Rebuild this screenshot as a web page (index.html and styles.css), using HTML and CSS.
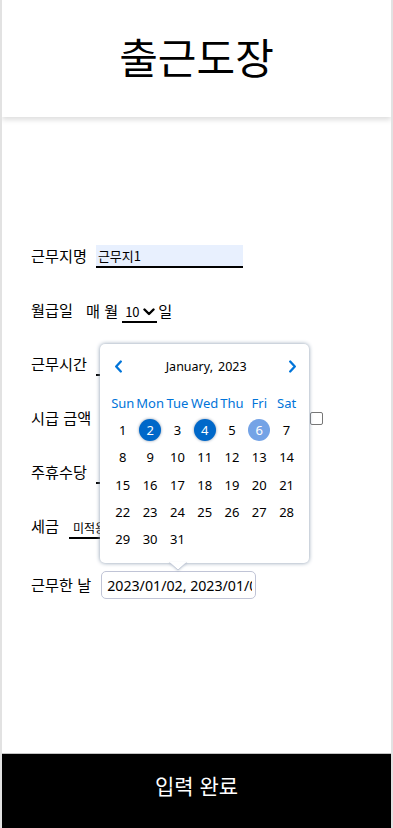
FILE: index.html
```html
<!DOCTYPE html>
<html lang="ko">
<head>
<meta charset="utf-8">
<title>출근도장</title>
<link rel="stylesheet" href="styles.css">
</head>
<body>
<div class="frame">
  <header class="top"><h1>출근도장</h1></header>
  <main class="form">
    <div class="row">
      <span class="label">근무지명</span>
      <div class="text-input filled">근무지1</div>
    </div>
    <div class="row">
      <span class="label">월급일</span>
      <span class="unit">매 월</span>
      <div class="select day-select"><span>10</span><svg class="chev" width="12" height="8" viewBox="0 0 12 8"><path d="M1.5 1.5 L6 6 L10.5 1.5" fill="none" stroke="#000" stroke-width="2.4" stroke-linecap="round" stroke-linejoin="round"/></svg></div>
      <span class="suffix">일</span>
    </div>
    <div class="row">
      <span class="label">근무시간</span>
      <div class="text-input plain"></div>
    </div>
    <div class="row">
      <span class="label">시급 금액</span>
      <div class="text-input wage"></div>
      <span class="checkbox"></span>
    </div>
    <div class="row">
      <span class="label">주휴수당</span>
      <div class="text-input plain"></div>
    </div>
    <div class="row">
      <span class="label">세금</span>
      <div class="select tax-select"><span>미적용</span></div>
    </div>
    <div class="row date-row">
      <span class="label">근무한 날</span>
      <div class="date-wrap">
        <input class="date-input" type="text" value="2023/01/02, 2023/01/04, 2023/01/06" readonly>
        <div class="calendar">
          <div class="cal-head">
            <span class="nav"><svg width="9" height="13" viewBox="0 0 9 13"><path d="M6.8 1.5 L2.2 6.5 L6.8 11.5" fill="none" stroke="#0074d9" stroke-width="2.3" stroke-linecap="round" stroke-linejoin="round"/></svg></span>
            <span class="cal-title"><span>January,</span><span>2023</span></span>
            <span class="nav"><svg width="9" height="13" viewBox="0 0 9 13"><path d="M2.2 1.5 L6.8 6.5 L2.2 11.5" fill="none" stroke="#0074d9" stroke-width="2.3" stroke-linecap="round" stroke-linejoin="round"/></svg></span>
          </div>
          <div class="cal-grid">
            <span class="wd">Sun</span><span class="wd">Mon</span><span class="wd">Tue</span><span class="wd">Wed</span><span class="wd">Thu</span><span class="wd">Fri</span><span class="wd">Sat</span>
            <span class="d"><span>1</span></span><span class="d sel"><span>2</span></span><span class="d"><span>3</span></span><span class="d sel"><span>4</span></span><span class="d"><span>5</span></span><span class="d hov"><span>6</span></span><span class="d"><span>7</span></span>
            <span class="d"><span>8</span></span><span class="d"><span>9</span></span><span class="d"><span>10</span></span><span class="d"><span>11</span></span><span class="d"><span>12</span></span><span class="d"><span>13</span></span><span class="d"><span>14</span></span>
            <span class="d"><span>15</span></span><span class="d"><span>16</span></span><span class="d"><span>17</span></span><span class="d"><span>18</span></span><span class="d"><span>19</span></span><span class="d"><span>20</span></span><span class="d"><span>21</span></span>
            <span class="d"><span>22</span></span><span class="d"><span>23</span></span><span class="d"><span>24</span></span><span class="d"><span>25</span></span><span class="d"><span>26</span></span><span class="d"><span>27</span></span><span class="d"><span>28</span></span>
            <span class="d"><span>29</span></span><span class="d"><span>30</span></span><span class="d"><span>31</span></span>
          </div>
          <svg class="tail" width="18" height="9" viewBox="0 0 18 9"><path d="M0 0 L9 8 L18 0" fill="#fff" stroke="#c3cad8" stroke-width="1"/><rect x="0" y="-1" width="18" height="1.5" fill="#fff"/></svg>
        </div>
      </div>
    </div>
  </main>
  <button class="submit" type="button">입력 완료</button>
</div>
</body>
</html>
```

FILE: styles.css
```css
html, body {
  margin: 0;
  padding: 0;
  background: #fff;
}

body {
  font-family: "Noto Sans CJK KR", "Noto Sans", sans-serif;
  color: #000;
}

.frame {
  width: 393px;
  height: 828px;
  box-sizing: border-box;
  border-left: 2px solid #e2e2e2;
  border-right: 2px solid #e2e2e2;
  display: flex;
  flex-direction: column;
  background: #fff;
  overflow: hidden;
}

.top {
  height: 117px;
  flex: none;
  box-sizing: border-box;
  padding-bottom: 4px;
  display: flex;
  align-items: center;
  justify-content: center;
  box-shadow: 0 3px 5px rgba(0, 0, 0, 0.13);
}

.top h1 {
  margin: 0;
  font-size: 42px;
  font-weight: 400;
  line-height: 1.2;
}

.form {
  flex: 1;
  padding-top: 112px;
  padding-left: 29px;
  display: flex;
  flex-direction: column;
}

.row {
  height: 54px;
  display: flex;
  align-items: center;
  font-size: 15.2px;
  white-space: nowrap;
}

.label {
  line-height: 1;
}

.text-input {
  box-sizing: border-box;
  height: 23px;
  margin-left: 9px;
  padding-left: 2px;
  font-size: 13px;
  display: flex;
  align-items: center;
  border-bottom: 2px solid #000;
}

.text-input.filled {
  width: 147px;
  background: #e8f0fe;
}

.text-input.plain {
  width: 160px;
  margin-top: 1px;
}

.text-input.wage {
  width: 206px;
  margin-left: 4px;
  border-bottom-color: transparent;
}

.unit {
  margin-left: 13px;
}

.select {
  box-sizing: border-box;
  height: 22px;
  display: flex;
  align-items: center;
  border-bottom: 2px solid #000;
  margin-top: 4px;
}

.day-select {
  width: 35px;
  margin-left: 4px;
  padding-left: 3px;
  font-size: 13px;
}

.day-select .chev {
  margin-left: 3px;
  margin-top: 1px;
}

.suffix {
  margin-left: 1px;
}

.tax-select {
  width: 120px;
  margin-left: 10px;
  padding-left: 4px;
  font-size: 12px;
}

.checkbox {
  width: 13px;
  height: 13px;
  box-sizing: border-box;
  border: 1px solid #767676;
  border-radius: 2px;
  margin-left: 9px;
  background: #fff;
}

.date-row {
  margin-top: 5px;
}

.date-wrap {
  position: relative;
  margin-left: 10px;
}

.date-input {
  display: block;
  box-sizing: border-box;
  width: 155px;
  height: 28px;
  margin: 0;
  padding: 0 3px 0 5px;
  border: 1px solid #c0c4d6;
  border-radius: 5px;
  font-family: "Noto Sans", sans-serif;
  font-size: 14.2px;
  color: #000;
  background: #fff;
  outline: none;
}

.calendar {
  position: absolute;
  left: -1px;
  bottom: calc(100% + 8px);
  width: 209px;
  box-sizing: border-box;
  padding: 0 8px 10px 9px;
  background: #fff;
  border-radius: 5px;
  box-shadow: 0 0 4px #8798ad;
  font-family: "Noto Sans", sans-serif;
  z-index: 5;
}

.cal-head {
  height: 45px;
  display: flex;
  align-items: center;
  justify-content: space-between;
}

.nav {
  width: 18px;
  height: 18px;
  display: flex;
  align-items: center;
  justify-content: center;
}

.cal-title {
  font-size: 12.5px;
  display: flex;
  gap: 5px;
  margin-left: 2px;
}

.cal-grid {
  display: grid;
  grid-template-columns: repeat(7, 27.3px);
  grid-auto-rows: 27.3px;
  font-size: 13px;
}

.wd {
  display: flex;
  align-items: center;
  justify-content: center;
  color: #0074d9;
  font-size: 13px;
}

.d {
  display: flex;
  align-items: center;
  justify-content: center;
}

.d span {
  width: 22px;
  height: 22px;
  border-radius: 50%;
  display: flex;
  align-items: center;
  justify-content: center;
}

.d.sel span {
  background: #0068c9;
  color: #fff;
  box-shadow: 0 0 3px #8798ad;
}

.d.hov span {
  background: #74a3e6;
  color: #fff;
}

.tail {
  position: absolute;
  top: 100%;
  left: 69px;
  margin-top: -1px;
  filter: drop-shadow(0 1px 1px rgba(135, 152, 173, 0.35));
}

.submit {
  flex: none;
  height: 75px;
  box-sizing: border-box;
  margin: 0;
  padding: 0 0 13px;
  border: none;
  border-top: 1px solid #c4c4c4;
  background: #000;
  color: #fff;
  font-family: "Noto Sans CJK KR", "Noto Sans", sans-serif;
  font-size: 21px;
  width: 100%;
}
```
